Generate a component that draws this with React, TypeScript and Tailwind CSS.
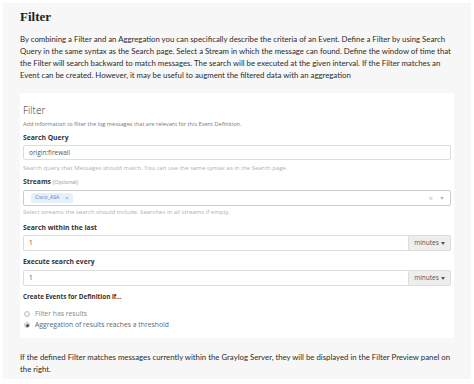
import React from "react";

const help = "text-[6px] leading-[8px] text-[#b0b0b0]";
const label = "text-[6.8px] leading-[10px] font-bold text-[#333]";

function Caret({ color = "border-t-[#555]" }: { color?: string }) {
  return (
    <span
      className={`inline-block ml-[2px] align-middle w-0 h-0 border-l-[2.5px] border-r-[2.5px] border-t-[3px] border-l-transparent border-r-transparent ${color}`}
    />
  );
}

function UnitInput({ value }: { value: string }) {
  return (
    <div className="flex h-[16px]">
      <div className="flex-1 border border-[#ddd] border-r-0 rounded-l-[2px] flex items-center pl-[5px] text-[6.5px] text-[#555]">
        {value}
      </div>
      <div className="w-[43px] bg-[#eee] border border-[#ddd] rounded-r-[2px] flex items-center justify-center text-[6.5px] text-[#555]">
        minutes
        <Caret />
      </div>
    </div>
  );
}

function Radio({ checked, text }: { checked?: boolean; text: string }) {
  return (
    <div className="flex items-center gap-[5px] h-[11px] pl-[1px]">
      <span className="w-[6px] h-[6px] rounded-full border border-[#c4c4c4] bg-[#f2f2f2] flex items-center justify-center">
        {checked && <span className="w-[3px] h-[3px] rounded-full bg-[#444]" />}
      </span>
      <span className={`text-[6.8px] ${checked ? "text-[#666]" : "text-[#888]"}`}>{text}</span>
    </div>
  );
}

export default function App() {
  return (
    <div className="bg-white w-[474px] h-[384px] p-[3px]" style={{ fontFamily: "'Open Sans', sans-serif" }}>
      <div className="bg-[#f7f7f7] h-[376px] px-[17px] pt-[6px]">
        <h2 className="text-[13px] leading-[16px] font-bold text-[#222]" style={{ fontFamily: "'Liberation Serif', serif" }}>
          Filter
        </h2>
        <p className="mt-[8px] text-[7.8px] leading-[12px] text-[#2b2b2b]" style={{ fontFamily: "Lato, sans-serif" }}>
          By combining a Filter and an Aggregation you can specifically describe the criteria of an Event. Define a Filter by using Search Query in the same syntax as the Search page. Select a Stream in which the message can found. Define the window of time that the Filter will search backward to match messages. The search will be executed at the given interval. If the Filter matches an Event can be created. However, it may be useful to augment the filtered data with an aggregation
        </p>

        <div className="bg-white mt-[12px] px-[3px] pt-[10px] pb-[7.5px]">
          <h3 className="text-[10px] leading-[14px] font-light text-[#333]">Filter</h3>
          <p className="mt-[2.5px] text-[5.6px] leading-[9px] text-[#777]">
            Add information to filter the log messages that are relevant for this Event Definition.
          </p>

          <div className={`mt-[4.5px] ${label}`}>Search Query</div>
          <div className="mt-[2px] h-[15px] border border-[#ddd] rounded-[2px] flex items-center pl-[5px] text-[6.5px] text-[#555]">
            origin:firewall
          </div>
          <div className={`mt-[4px] ${help}`}>
            Search query that Messages should match. You can use the same syntax as in the Search page.
          </div>

          <div className={`mt-[5px] ${label}`}>
            Streams <span className="font-normal text-[5.5px] text-[#999]">(Optional)</span>
          </div>
          <div className="mt-[3px] h-[16px] border border-[#ccc] rounded-[2px] flex items-center pl-[7px] pr-[6px]">
            <span className="bg-[#e6f0fb] rounded-[2px] text-[5.2px] text-[#4a86c8] px-[4px] h-[10px] flex items-center gap-[6px]">
              Cisco_ASA <span className="text-[5.5px]">×</span>
            </span>
            <span className="ml-auto text-[8px] text-[#bbb] leading-none">×</span>
            <span className="ml-[5px] flex items-center">
              <Caret color="border-t-[#bbb]" />
            </span>
          </div>
          <div className={`mt-[2px] ${help}`}>
            Select streams the search should include. Searches in all streams if empty.
          </div>

          <div className={`mt-[7px] ${label}`}>Search within the last</div>
          <div className="mt-[2px]">
            <UnitInput value="1" />
          </div>

          <div className={`mt-[6px] ${label}`}>Execute search every</div>
          <div className="mt-[3px]">
            <UnitInput value="1" />
          </div>

          <div className="mt-[6px] text-[6.3px] leading-[10px] font-bold text-[#333]">
            Create Events for Definition if...
          </div>
          <div className="mt-[6.5px] flex flex-col">
            <Radio text="Filter has results" />
            <Radio checked text="Aggregation of results reaches a threshold" />
          </div>
        </div>

        <p className="mt-[13px] text-[7.8px] leading-[12px] text-[#2b2b2b]" style={{ fontFamily: "Lato, sans-serif" }}>
          If the defined Filter matches messages currently within the Graylog Server, they will be displayed in the Filter Preview panel on the right.
        </p>
      </div>
    </div>
  );
}
